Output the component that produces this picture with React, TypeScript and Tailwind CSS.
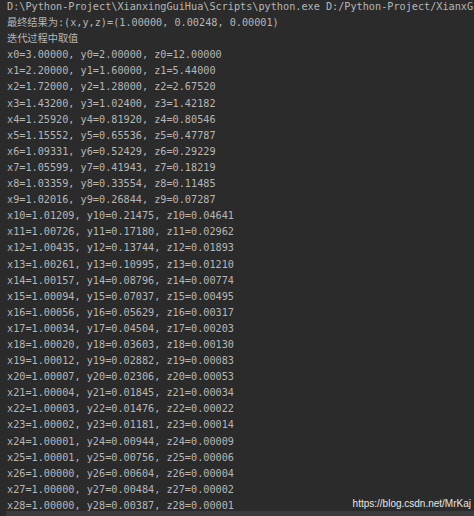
const rows = [
  ["3.00000", "2.00000", "12.00000"],
  ["2.20000", "1.60000", "5.44000"],
  ["1.72000", "1.28000", "2.67520"],
  ["1.43200", "1.02400", "1.42182"],
  ["1.25920", "0.81920", "0.80546"],
  ["1.15552", "0.65536", "0.47787"],
  ["1.09331", "0.52429", "0.29229"],
  ["1.05599", "0.41943", "0.18219"],
  ["1.03359", "0.33554", "0.11485"],
  ["1.02016", "0.26844", "0.07287"],
  ["1.01209", "0.21475", "0.04641"],
  ["1.00726", "0.17180", "0.02962"],
  ["1.00435", "0.13744", "0.01893"],
  ["1.00261", "0.10995", "0.01210"],
  ["1.00157", "0.08796", "0.00774"],
  ["1.00094", "0.07037", "0.00495"],
  ["1.00056", "0.05629", "0.00317"],
  ["1.00034", "0.04504", "0.00203"],
  ["1.00020", "0.03603", "0.00130"],
  ["1.00012", "0.02882", "0.00083"],
  ["1.00007", "0.02306", "0.00053"],
  ["1.00004", "0.01845", "0.00034"],
  ["1.00003", "0.01476", "0.00022"],
  ["1.00002", "0.01181", "0.00014"],
  ["1.00001", "0.00944", "0.00009"],
  ["1.00001", "0.00756", "0.00006"],
  ["1.00000", "0.00604", "0.00004"],
  ["1.00000", "0.00484", "0.00002"],
  ["1.00000", "0.00387", "0.00001"],
];

export default function App() {
  return (
    <div className="relative w-[474px] h-[516px] bg-[#2b2b2b] overflow-hidden flex flex-col">
      {/* Console output */}
      <div
        className="flex-1 min-h-0 overflow-hidden -mt-px pl-[7px] text-[10.2px] leading-[16.1px] text-[#b6b6b6] whitespace-pre"
        style={{ fontFamily: "'DejaVu Sans Mono', 'Noto Sans CJK SC', monospace" }}
      >
        <div>D:\Python-Project\XianxingGuiHua\Scripts\python.exe D:/Python-Project/XianxG</div>
        <div>最终结果为:(x,y,z)=(1.00000, 0.00248, 0.00001)</div>
        <div>迭代过程中取值</div>
        {rows.map((r, i) => (
          <div key={i}>{`x${i}=${r[0]}, y${i}=${r[1]}, z${i}=${r[2]}`}</div>
        ))}
      </div>

      {/* Bottom bar */}
      <div className="shrink-0 h-[5px] ml-[6px] bg-[#3b3b3b]" />

      {/* Watermark */}
      <div
        className="absolute right-[3px] bottom-[6px] text-[10px] leading-[12px] text-[#e6e6e6]"
        style={{ fontFamily: "'Liberation Sans', Arial, sans-serif" }}
      >
        https://blog.csdn.net/MrKaj
      </div>
    </div>
  );
}
